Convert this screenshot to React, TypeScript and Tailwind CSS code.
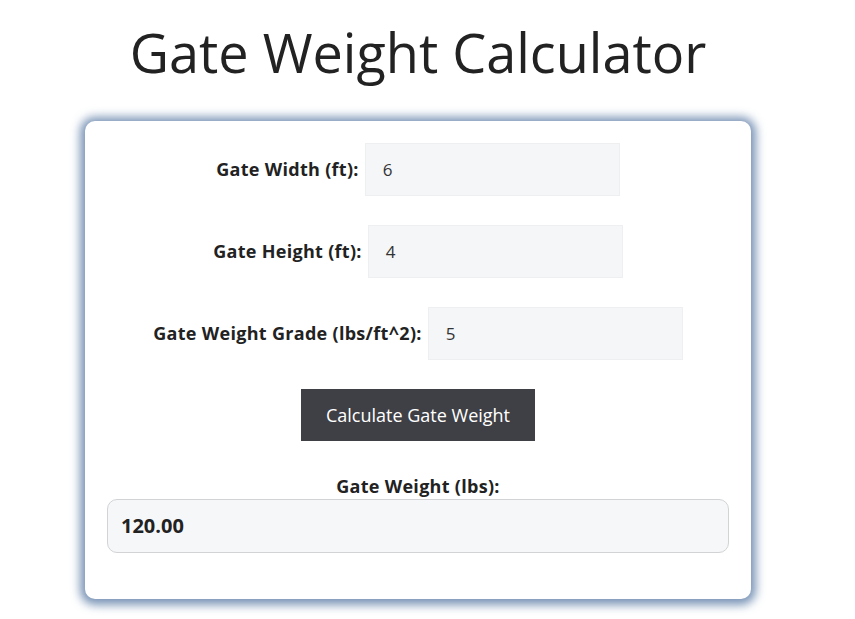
import React from "react";

const font = { fontFamily: '"Open Sans", "Noto Sans", sans-serif' };

function Row({ label, value }: { label: string; value: string }) {
  return (
    <div className="flex items-center justify-center gap-[6px]">
      <label className="text-[18px] font-bold text-[#222] tracking-[0.3px]">{label}</label>
      <div className="w-[255px] h-[53px] bg-[#f5f6f8] border border-[#eeeff1] flex items-center pl-[17px] text-[17px] text-[#333]">
        {value}
      </div>
    </div>
  );
}

export default function App() {
  return (
    <div className="w-[855px] h-[619px] bg-white flex flex-col items-center" style={font}>
      <h1 className="text-[54px] leading-[66px] text-[#222] mt-[19px] ml-[-19px]">Gate Weight Calculator</h1>
      <div className="mt-[36px] ml-[-19px] w-[666px] h-[478px] bg-white rounded-[10px] shadow-[0_1px_10px_5px_rgba(100,130,170,0.85)] px-[22px] pt-[22px] flex flex-col">
        <div className="flex flex-col gap-[29px]">
          <Row label="Gate Width (ft):" value="6" />
          <Row label="Gate Height (ft):" value="4" />
          <Row label="Gate Weight Grade (lbs/ft^2):" value="5" />
        </div>
        <div className="flex justify-center mt-[29px]">
          <button className="w-[234px] h-[52px] bg-[#3f3f46] text-white text-[18px]">Calculate Gate Weight</button>
        </div>
        <div className="text-center font-bold text-[18px] tracking-[0.3px] text-[#222] mt-[33px] leading-[24px]">Gate Weight (lbs):</div>
        <div className="mt-[1px] h-[54px] rounded-[10px] border border-[#d2d3d5] bg-[#f6f7f9] flex items-center pl-[13px] text-[20px] font-bold text-[#222]">
          120.00
        </div>
      </div>
    </div>
  );
}
